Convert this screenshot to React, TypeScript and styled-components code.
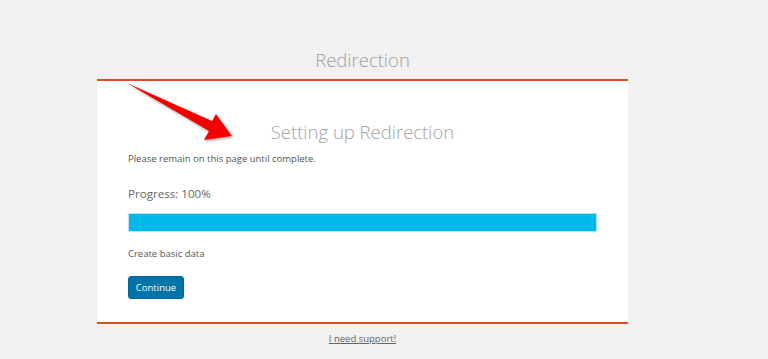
import React from 'react';
import styled, { createGlobalStyle } from 'styled-components';

const GlobalStyle = createGlobalStyle`
  html, body {
    margin: 0;
    padding: 0;
    background: #f1f1f1;
  }
  body {
    font-family: "Open Sans", "Noto Sans", "Liberation Sans", sans-serif;
    color: #555;
  }
`;

const Page = styled.div`
  width: 768px;
  height: 359px;
  padding-left: 97px;
  box-sizing: border-box;
  overflow: hidden;
`;

const Wrap = styled.div`
  width: 531px;
  position: relative;
`;

const Title = styled.h1`
  margin: 0;
  height: 79px;
  padding-top: 47px;
  box-sizing: border-box;
  text-align: center;
  font-size: 18.5px;
  line-height: 26px;
  font-weight: 300;
  color: #a0a0a0;
`;

const Card = styled.div`
  background: #fff;
  border-top: 2px solid #d9501e;
  border-bottom: 2px solid #d9501e;
  padding: 38px 31px 21px;
  height: 245px;
  box-sizing: border-box;
`;

const Heading = styled.h2`
  margin: 0;
  text-align: center;
  font-size: 18.5px;
  font-weight: 300;
  color: #a3a3a3;
  line-height: 26px;
`;

const Note = styled.p<{ $top: number }>`
  margin: ${(p) => p.$top}px 0 0;
  font-size: 9.5px;
  line-height: 14px;
  color: #555;
`;

const Progress = styled.h3`
  margin: 19px 0 0;
  font-size: 11.6px;
  font-weight: 400;
  line-height: 18px;
  color: #666;
`;

const Bar = styled.div`
  margin-top: 10px;
  height: 19px;
  background: #b5e6f6;
  padding: 1px;
  box-sizing: border-box;
`;

const Fill = styled.div`
  height: 100%;
  background: #00b9eb;
`;

const Button = styled.button`
  margin-top: 15px;
  width: 56px;
  height: 23px;
  padding: 0;
  border: 1px solid #006799;
  border-radius: 3px;
  background: #0073aa;
  color: #fff;
  font-family: inherit;
  font-size: 9.5px;
  cursor: pointer;
`;

const Footer = styled.div`
  text-align: center;
  margin-top: 8px;
  font-size: 9.5px;
`;

const SupportLink = styled.a`
  color: #666;
  text-decoration: underline;
`;

const Arrow = styled.svg`
  position: absolute;
  left: 24px;
  top: 78px;
  overflow: visible;
`;

export default function App() {
  const progress = 100;
  return (
    <>
      <GlobalStyle />
      <Page>
        <Wrap>
          <Title>Redirection</Title>
          <Card>
            <Heading>Setting up Redirection</Heading>
            <Note $top={7}>Please remain on this page until complete.</Note>
            <Progress>Progress: {progress}%</Progress>
            <Bar>
              <Fill style={{ width: `${progress}%` }} />
            </Bar>
            <Note $top={15}>Create basic data</Note>
            <Button>Continue</Button>
          </Card>
          <Footer>
            <SupportLink href="#">I need support!</SupportLink>
          </Footer>
          <Arrow width="120" height="70" viewBox="0 0 120 70">
            <defs>
              <filter id="sh" x="-20%" y="-20%" width="140%" height="140%">
                <feDropShadow dx="1" dy="1.5" stdDeviation="1" floodColor="#000" floodOpacity="0.35" />
              </filter>
            </defs>
            <polygon
              points="6,5 91,43 95,36 111,58 83,62 88,53"
              fill="#f50000"
              filter="url(#sh)"
            />
          </Arrow>
        </Wrap>
      </Page>
    </>
  );
}
